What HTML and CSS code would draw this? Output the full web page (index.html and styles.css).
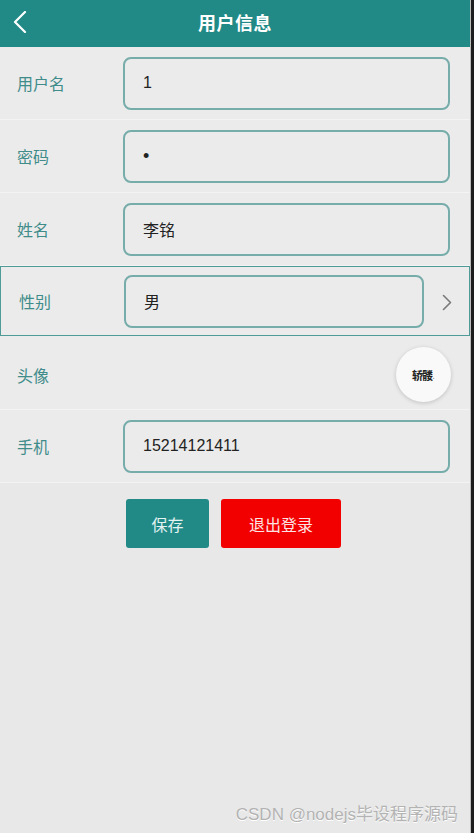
FILE: index.html
```html
<!DOCTYPE html>
<html lang="zh-CN">
<head>
    <meta charset="UTF-8">
    <meta name="viewport" content="width=device-width, initial-scale=1.0">
    <title>用户信息</title>
    <link rel="stylesheet" href="styles.css">
</head>
<body>
    <div class="page">
        <div class="header">
            <span class="back">
                <svg width="14" height="22" viewBox="0 0 14 22"><path d="M12 1 L2 11 L12 21" fill="none" stroke="#fff" stroke-width="2.2" stroke-linecap="round" stroke-linejoin="round"/></svg>
            </span>
            <h1>用户信息</h1>
        </div>

        <div class="form">
            <div class="row">
                <label>用户名</label>
                <div class="field">1</div>
            </div>
            <div class="row">
                <label>密码</label>
                <div class="field dot">•</div>
            </div>
            <div class="row">
                <label>姓名</label>
                <div class="field">李铭</div>
            </div>
            <div class="row row-select">
                <label>性别</label>
                <div class="field">男</div>
                <span class="arrow">
                    <svg width="10" height="17" viewBox="0 0 10 17"><path d="M1.5 1.5 L8.5 8.5 L1.5 15.5" fill="none" stroke="#7a7a7a" stroke-width="1.6" stroke-linecap="round" stroke-linejoin="round"/></svg>
                </span>
            </div>
            <div class="row row-avatar">
                <label>头像</label>
                <div class="avatar"><span>轿髅</span>.</div>
            </div>
            <div class="row">
                <label>手机</label>
                <div class="field">15214121411</div>
            </div>
        </div>

        <div class="actions">
            <button class="btn btn-save">保存</button>
            <button class="btn btn-logout">退出登录</button>
        </div>

        <div class="watermark">CSDN @nodejs毕设程序源码</div>
    </div>
</body>
</html>
```

FILE: styles.css
```css
* {
    margin: 0;
    padding: 0;
    box-sizing: border-box;
    font-family: "Liberation Sans", "Noto Sans CJK SC", sans-serif;
}

body {
    background: #1e1e1e;
}

.page {
    width: 471px;
    height: 833px;
    background: #e8e8e8;
    border-right: 1px solid #bdbdbd;
    display: flex;
    flex-direction: column;
}

.header {
    height: 47px;
    background: #218a87;
    display: flex;
    align-items: center;
    justify-content: center;
    position: relative;
    padding-bottom: 3px;
}

.header h1 {
    color: #fff;
    font-size: 18px;
    font-weight: bold;
    letter-spacing: 0.5px;
}

.back {
    position: absolute;
    left: 13px;
    top: 11px;
    display: flex;
}

.row {
    height: 73px;
    background: #ebebeb;
    border-bottom: 1px solid #f3f3f3;
    display: flex;
    align-items: center;
    padding-right: 20px;
}

.row label {
    width: 123px;
    padding-left: 17px;
    color: #3f8c8a;
    font-size: 16px;
}

.field {
    flex: 1;
    height: 53px;
    border: 2px solid #76acaa;
    border-radius: 8px;
    display: flex;
    align-items: center;
    padding-left: 18px;
    font-size: 16px;
    color: #222;
}

.field.dot {
    font-size: 18px;
}

.row-select {
    height: 70px;
    border: 1px solid #4f9b98;
    padding-right: 0;
}

.row-select label {
    padding-left: 18px;
}

.row-select .field {
    flex: 0 0 300px;
}

.arrow {
    flex: 1;
    display: flex;
    justify-content: center;
    padding-top: 2px;
}

.row-avatar {
    height: 74px;
    justify-content: space-between;
    padding-right: 19px;
    padding-top: 4px;
}

.avatar {
    width: 55px;
    height: 55px;
    border-radius: 50%;
    background: #f9f9f9;
    box-shadow: 0 1px 4px rgba(0, 0, 0, 0.18);
    display: flex;
    align-items: center;
    justify-content: center;
    font-size: 11px;
    color: #999;
}

.avatar span {
    color: #222;
    font-weight: bold;
    letter-spacing: -1px;
}

.actions {
    display: flex;
    gap: 12px;
    padding: 16px 0 0 126px;
}

.btn {
    height: 49px;
    border: none;
    border-radius: 3px;
    font-size: 16px;
    font-family: "Noto Sans CJK SC", sans-serif;
}

.btn-save {
    width: 83px;
    background: #218a87;
    color: #e4f3f2;
}

.btn-logout {
    width: 120px;
    background: #f20000;
    color: #fde3e3;
}

.watermark {
    margin-top: auto;
    margin-bottom: 8px;
    padding-right: 12px;
    text-align: right;
    color: #b3b3b3;
    font-size: 17px;
    text-shadow: 0 1px 0 #fff;
}
```
